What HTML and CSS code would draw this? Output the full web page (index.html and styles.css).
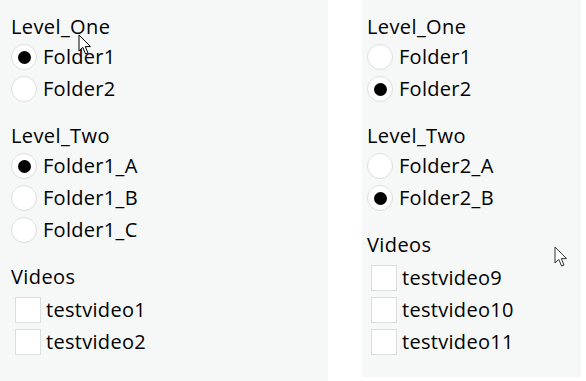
FILE: index.html
```html
<!DOCTYPE html>
<html lang="en">
<head>
  <meta charset="UTF-8">
  <meta name="viewport" content="width=device-width, initial-scale=1.0">
  <title>Folder Picker</title>
  <link rel="stylesheet" href="styles.css">
</head>
<body>
  <div class="pickers">
    <!-- First picker: Folder1 selected -->
    <div class="picker picker-left">
      <div class="group">
        <div class="group-title">Level_One</div>
        <label class="option"><input type="radio" name="l1a" checked> Folder1</label>
        <label class="option"><input type="radio" name="l1a"> Folder2</label>
      </div>
      <div class="group">
        <div class="group-title">Level_Two</div>
        <label class="option"><input type="radio" name="l2a" checked> Folder1_A</label>
        <label class="option"><input type="radio" name="l2a"> Folder1_B</label>
        <label class="option"><input type="radio" name="l2a"> Folder1_C</label>
      </div>
      <div class="group videos">
        <div class="group-title">Videos</div>
        <label class="option"><input type="checkbox"> testvideo1</label>
        <label class="option"><input type="checkbox"> testvideo2</label>
      </div>

      <!-- mouse pointer from the capture -->
      <svg class="pointer pointer-one" width="14" height="22" viewBox="0 0 14 22">
        <path d="M1 1 L1 17 L4.8 13.4 L7.6 20 L10 19 L7.3 12.6 L12.5 12.6 Z" fill="#fff" stroke="#000" stroke-width="1"/>
      </svg>
    </div>

    <!-- Second picker: Folder2 selected -->
    <div class="picker picker-right">
      <div class="group">
        <div class="group-title">Level_One</div>
        <label class="option"><input type="radio" name="l1b"> Folder1</label>
        <label class="option"><input type="radio" name="l1b" checked> Folder2</label>
      </div>
      <div class="group">
        <div class="group-title">Level_Two</div>
        <label class="option"><input type="radio" name="l2b"> Folder2_A</label>
        <label class="option"><input type="radio" name="l2b" checked> Folder2_B</label>
      </div>
      <div class="group videos">
        <div class="group-title">Videos</div>
        <label class="option"><input type="checkbox"> testvideo9</label>
        <label class="option"><input type="checkbox"> testvideo10</label>
        <label class="option"><input type="checkbox"> testvideo11</label>
      </div>

      <svg class="pointer pointer-two" width="14" height="22" viewBox="0 0 14 22">
        <path d="M1 1 L1 17 L4.8 13.4 L7.6 20 L10 19 L7.3 12.6 L12.5 12.6 Z" fill="#fff" stroke="#333" stroke-width="1"/>
      </svg>
    </div>
  </div>
</body>
</html>
```

FILE: styles.css
```css
body {
  margin: 0;
  background: #fff;
  font-family: "Open Sans", "Noto Sans", sans-serif;
  color: #000;
}

/* Two pickers side by side */
.pickers {
  display: flex;
  gap: 34px;
  align-items: flex-start;
}

.picker {
  position: relative;
  background: #f6f7f7;
  box-sizing: border-box;
  padding-top: 14px;
}

.picker-left {
  width: 328px;
  height: 381px;
  padding-left: 11px;
}

.picker-right {
  width: 219px;
  height: 377px;
  padding-left: 5px;
}

.group {
  margin-bottom: 18px;
}

.group-title {
  font-size: 20px;
  line-height: 24px;
  letter-spacing: 0.4px;
  padding-top: 1px;
  margin-bottom: 2px;
}

.videos .group-title {
  margin-bottom: 5px;
}

.option {
  display: flex;
  align-items: center;
  height: 32px;
  font-size: 20px;
  line-height: 24px;
  letter-spacing: 0.3px;
}

/* Radio buttons */
.option input[type="radio"] {
  appearance: none;
  -webkit-appearance: none;
  margin: 0 6px 0 0;
  width: 26px;
  height: 26px;
  border: 1px solid #dedede;
  border-radius: 50%;
  background: #fff;
  box-sizing: border-box;
  display: flex;
  align-items: center;
  justify-content: center;
}

.option input[type="radio"]:checked::after {
  content: "";
  width: 13px;
  height: 13px;
  border-radius: 50%;
  background: #000;
}

/* Checkboxes */
.option input[type="checkbox"] {
  appearance: none;
  -webkit-appearance: none;
  margin: 0 5px 0 4px;
  width: 26px;
  height: 26px;
  border: 1px solid #dedede;
  background: #fff;
  box-sizing: border-box;
}

.pointer {
  position: absolute;
}

.pointer-one {
  left: 78px;
  top: 34px;
}

.pointer-two {
  left: 192px;
  top: 246px;
}
```
